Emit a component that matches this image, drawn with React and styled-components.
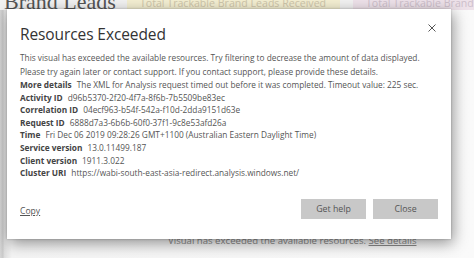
import React from "react";
import styled, { createGlobalStyle } from "styled-components";

const GlobalStyle = createGlobalStyle`
  html, body { margin: 0; padding: 0; background: #ededed; }
  * { box-sizing: border-box; }
`;

const Page = styled.div`
  position: relative;
  width: 474px;
  height: 258px;
  overflow: hidden;
  background: #eeeeee;
  font-family: "Open Sans", "Noto Sans", sans-serif;
  display: flex;
  flex-direction: column;
`;

const TopBar = styled.div`
  display: flex;
  align-items: flex-start;
  height: 10px;
  overflow: hidden;
  background: #f2f2f2;
`;

const PageHeading = styled.div`
  font-family: "Liberation Serif", serif;
  font-size: 22px;
  line-height: 22px;
  color: #555;
  margin-top: -9px;
  padding-left: 4px;
  width: 127px;
  white-space: nowrap;
`;

const Tile = styled.div`
  height: 10px;
  width: ${(p) => p.$w}px;
  margin-left: ${(p) => p.$ml}px;
  background: ${(p) => p.$bg};
  color: ${(p) => p.$fg};
  font-size: 10.6px;
  line-height: 12px;
  padding-left: 13px;
  white-space: nowrap;
  overflow: hidden;
  & > span { display: block; margin-top: -3px; }
`;

const Canvas = styled.div`
  flex: 1;
  background: linear-gradient(90deg, #d6d6d6 0, #c9c9c9 3px, #dcdcdc 4px, #e6e6e6 7px, #f4f4f4 12px, #fafafa 100%);
  position: relative;
`;

const BehindMessage = styled.div`
  position: absolute;
  left: 168px;
  top: 224px;
  font-size: 9.6px;
  color: #8a8a8a;
  white-space: nowrap;
  & a { color: #8a8a8a; text-decoration: underline; }
`;

const Dialog = styled.div`
  position: absolute;
  left: 7px;
  top: 9px;
  width: 444px;
  height: 230px;
  background: #ffffff;
  box-shadow: 2px 4px 14px rgba(0, 0, 0, 0.42), 0 0 2px rgba(0, 0, 0, 0.25);
  padding: 14px 13px 20px 13px;
  display: flex;
  flex-direction: column;
`;

const Header = styled.div`
  display: flex;
  align-items: flex-start;
  justify-content: space-between;
  height: 28px;
`;

const Title = styled.h1`
  margin: 0;
  font-size: 15.5px;
  line-height: 22px;
  font-weight: 400;
  color: #333;
  letter-spacing: -0.1px;
`;

const CloseX = styled.button`
  border: 0;
  background: none;
  padding: 0;
  margin: 1px 2px 0 0;
  width: 8px;
  height: 8px;
  display: flex;
  cursor: pointer;
`;

const Paragraph = styled.p`
  margin: 0 0 0 0;
  font-size: 8.3px;
  line-height: 14px;
  color: #555;
`;

const Details = styled.div`
  display: flex;
  flex-direction: column;
`;

const Row = styled.div`
  font-size: 8.3px;
  line-height: 12.6px;
  color: #555;
  white-space: nowrap;
`;

const Label = styled.span`
  font-weight: 700;
  color: #444;
  margin-right: 5px;
`;

const Footer = styled.div`
  margin-top: auto;
  display: flex;
  align-items: center;
  justify-content: space-between;
`;

const CopyLink = styled.a`
  font-size: 8.6px;
  color: #555;
  text-decoration: underline;
  margin-top: 4px;
`;

const Buttons = styled.div`
  display: flex;
  gap: 7px;
`;

const Button = styled.button`
  width: 65px;
  height: 20px;
  border: 0;
  background: #c8c8c8;
  color: #555;
  font-family: "Open Sans", "Noto Sans", sans-serif;
  font-size: 8.8px;
  padding: 0;
  cursor: pointer;
`;

const details = [
  ["More details", "The XML for Analysis request timed out before it was completed. Timeout value: 225 sec."],
  ["Activity ID", "d96b5370-2f20-4f7a-8f6b-7b5509be83ec"],
  ["Correlation ID", "04ecf963-b54f-542a-f10d-2dda9151d63e"],
  ["Request ID", "6888d7a3-6b6b-60f0-37f1-9c8e53afd26a"],
  ["Time", "Fri Dec 06 2019 09:28:26 GMT+1100 (Australian Eastern Daylight Time)"],
  ["Service version", "13.0.11499.187"],
  ["Client version", "1911.3.022"],
  ["Cluster URI", "https://wabi-south-east-asia-redirect.analysis.windows.net/"],
];

export default function App() {
  return (
    <>
      <GlobalStyle />
      <Page>
        <TopBar>
          <PageHeading>Brand Leads</PageHeading>
          <Tile $w={213} $ml={0} $bg="#f4efd2" $fg="#cfc6aa"><span>Total Trackable Brand Leads Received</span></Tile>
          <Tile $w={121} $ml={13} $bg="#eee2ea" $fg="#cdbfca"><span>Total Trackable Brand Leads</span></Tile>
        </TopBar>
        <Canvas>
          <BehindMessage>
            Visual has exceeded the available resources. <a>See details</a>
          </BehindMessage>
        </Canvas>
        <Dialog role="dialog">
          <Header>
            <Title>Resources Exceeded</Title>
            <CloseX aria-label="Close">
              <svg width="8" height="8" viewBox="0 0 8 8">
                <path d="M0.5 0.5 L7.5 7.5 M7.5 0.5 L0.5 7.5" stroke="#555" strokeWidth="1" fill="none" />
              </svg>
            </CloseX>
          </Header>
          <Paragraph>
            This visual has exceeded the available resources. Try filtering to decrease the amount of data displayed.
            <br />
            Please try again later or contact support. If you contact support, please provide these details.
          </Paragraph>
          <Details>
            {details.map(([k, v]) => (
              <Row key={k}>
                <Label>{k}</Label>
                {v}
              </Row>
            ))}
          </Details>
          <Footer>
            <CopyLink>Copy</CopyLink>
            <Buttons>
              <Button>Get help</Button>
              <Button>Close</Button>
            </Buttons>
          </Footer>
        </Dialog>
      </Page>
    </>
  );
}
